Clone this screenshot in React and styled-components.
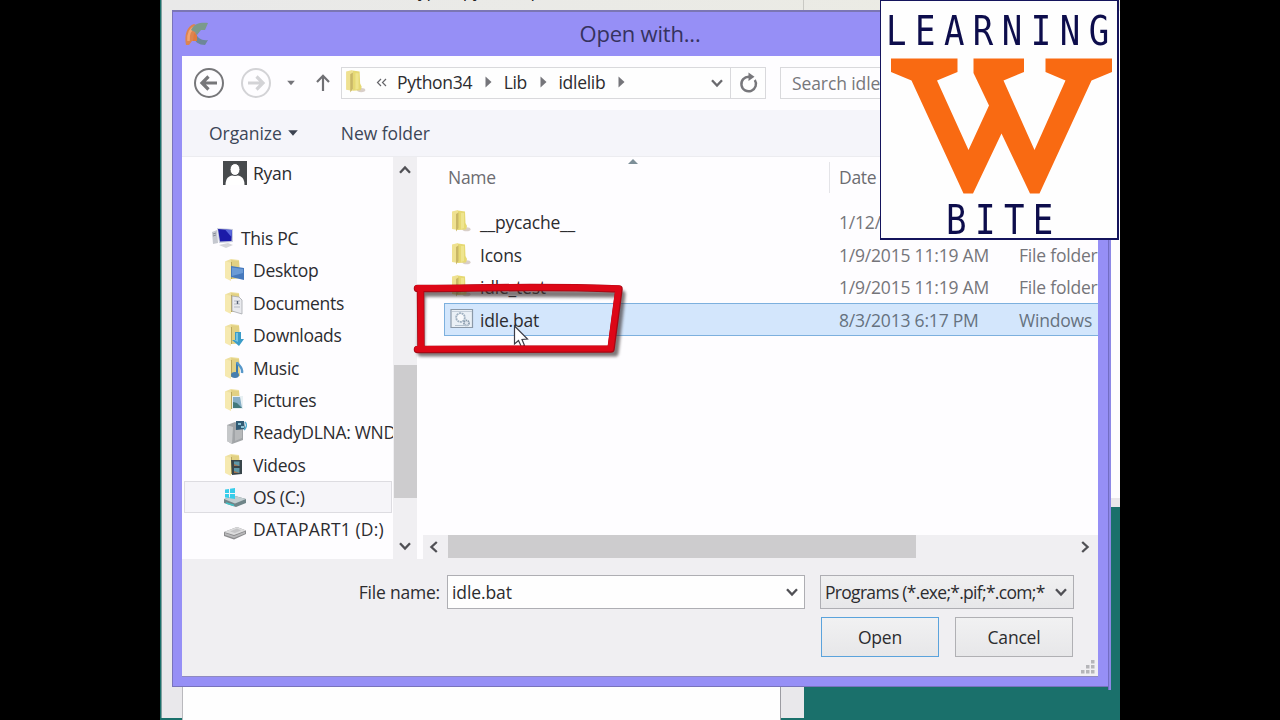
import React from "react";
import styled, { createGlobalStyle, css } from "styled-components";

const GlobalStyle = createGlobalStyle`
  * {
    box-sizing: border-box;
  }

  body {
    margin: 0;
    background: #000;
    overflow: hidden;
  }
`;

const places = [
  { name: "Ryan", icon: "user" },
  { gap: true },
  { name: "This PC", icon: "pc", root: true },
  { name: "Desktop", icon: "desktop" },
  { name: "Documents", icon: "documents" },
  { name: "Downloads", icon: "downloads" },
  { name: "Music", icon: "music" },
  { name: "Pictures", icon: "pictures" },
  { name: "ReadyDLNA: WND", icon: "server" },
  { name: "Videos", icon: "videos" },
  { name: "OS (C:)", icon: "osdrive", active: true },
  { name: "DATAPART1 (D:)", icon: "drive", wide: true },
];

const files = [
  { name: "__pycache__", date: "1/12/" },
  { name: "Icons", date: "1/9/2015 11:19 AM", type: "File folder" },
  { name: "idle_test", date: "1/9/2015 11:19 AM", type: "File folder" },
  { name: "idle.bat", date: "8/3/2013 6:17 PM", type: "Windows", selected: true },
];

/* ---------- icons ---------- */

function FolderIcon({ size = 24, children }) {
  return (
    <svg width={size} height={size} viewBox="1 0 24 24">
      <path d="M4 3 L9 1 L17 2 L18 20 L9 21 L4 20Z" fill="#eee0a0" />
      <path d="M9 2 L17 3 L18 20 L10 21Z" fill="#e2d183" />
      <path d="M3 3 L9 5 L9 23 L3 20Z" fill="#f6e9b0" />
      <path d="M9.5 4 L9.5 21" stroke="#b9a65c" strokeWidth="1" />
      {children}
    </svg>
  );
}

function PlainFolder({ size = 24 }) {
  return (
    <svg width={size} height={size} viewBox="1 1 24 24">
      <ellipse cx="17.5" cy="20.3" rx="4" ry="2" fill="#d9cfc9" />
      <path d="M3 2.5 L9 1 L9 21 L3 20Z" fill="#efe190" />
      <path d="M9 1.5 L16 2.5 L16.5 14 L18 17 L17 20.5 L9 21Z" fill="#e6d974" />
      <path d="M7 5 L9.5 3.5 L9.5 19 L7 22.5Z" fill="#c9b766" />
      <path d="M12 4 L15 4 L15 19 L12 20Z" fill="#efe58e" />
    </svg>
  );
}

function PlaceIcon({ kind }) {
  switch (kind) {
    case "user":
      return (
        <svg width="24" height="24" viewBox="0 0 24 24">
          <path d="M0 0H24V24H0Z" fill="#474a4d" />
          <path d="M2.5 24 C2.5 17 6 15 9 14.5 L15 14.5 C18 15 21.5 17 21.5 24Z" fill="#fff" />
          <ellipse cx="12" cy="8.5" rx="5" ry="6" fill="#fff" stroke="#474a4d" strokeWidth="1" />
        </svg>
      );
    case "pc":
      return (
        <svg width="24" height="24" viewBox="0 0 24 24">
          <path d="M1 6 L6 4 L7 17 L2 18Z" fill="#c5c8cf" />
          <path d="M2 8 L5 7 M2 10 L5 9" stroke="#888d99" />
          <path d="M6 2 L22 3 L22 16 L8 17Z" fill="#c9cede" />
          <path d="M7 3 L21 4 L20.5 15 L9 15.5Z" fill="#1b1aa8" />
          <path d="M14 3.5 L21 4 L20.5 11Z" fill="#5a68dc" />
          <path d="M8 19 L17 17 L22 19 L15 22Z" fill="#d5d5da" />
        </svg>
      );
    case "desktop":
      return (
        <FolderIcon>
          <path d="M9 8 L22 10 L22 22 L9 19Z" fill="#4679bd" />
          <path d="M10 9.5 L21 11 L21 15 L10 18Z" fill="#6b9bd6" />
        </FolderIcon>
      );
    case "documents":
      return (
        <FolderIcon>
          <path d="M10 5 L17 6 L20 9 L20 23 L10 20Z" fill="#e9eaee" stroke="#a6a8ad" strokeWidth=".8" />
          <path d="M12 10 H18 M12 13 H18 M12 16 H18" stroke="#b4bac5" />
          <path d="M15.5 10 V13" stroke="#566174" strokeWidth="1.4" />
        </FolderIcon>
      );
    case "downloads":
      return (
        <FolderIcon>
          <path d="M13 9 H19 V16 H22 L17 23 L10 17 H13Z" fill="#3b9cc8" />
          <path d="M14 10 H16 V19 L12 17 H14Z" fill="#75c4e2" />
        </FolderIcon>
      );
    case "music":
      return (
        <FolderIcon>
          <path d="M15 7 V18" stroke="#3a79ad" strokeWidth="2" />
          <path d="M15 6 C16 10 21 10 20 17" stroke="#5697c9" strokeWidth="2.4" fill="none" />
          <ellipse cx="13" cy="19" rx="4" ry="3" fill="#477fae" />
        </FolderIcon>
      );
    case "pictures":
      return (
        <FolderIcon>
          <path d="M10 8 L21 8 L21 21 L10 21Z" fill="#e8f0f3" />
          <path d="M11 9 L18 9 L20 20 L11 20Z" fill="#86aec6" />
          <path d="M11 14 L15 15 L20 20 L11 20Z" fill="#43797c" />
        </FolderIcon>
      );
    case "server":
      return (
        <svg width="24" height="24" viewBox="0 0 24 24">
          <path d="M4 5 L12 2 L20 6 L20 20 L9 24 L4 21Z" fill="#a2a5a8" />
          <path d="M4 5 L10 7 L9 24 L4 21Z" fill="#c6c8ca" />
          <path d="M12 10 L19 9 L19 18 L12 21Z" fill="#b7b9bb" />
          <path d="M13 1 L21 1 L22 9 L13 10Z" fill="#315b75" />
          <path d="M15 3 H18 V5 H15Z M18 6 H21 V8 H18Z" fill="#8bc3d6" />
          <path d="M22 2 C24 4 24 7 21 10" stroke="#53add0" fill="none" strokeWidth="1.5" />
        </svg>
      );
    case "videos":
      return (
        <FolderIcon>
          <path d="M9 7 L20 7 L20 21 L10 22Z" fill="#39464b" />
          <path d="M12 8.5 H17.5 V13 H12Z M12 15 H17.5 V20 H12Z" fill="#5f98a8" />
          <path d="M12 11 L17.5 13 H12Z M12 18 L17.5 20 H12Z" fill="#a1744f" />
        </FolderIcon>
      );
    case "osdrive":
      return (
        <svg width="24" height="24" viewBox="0 0 24 24">
          <path d="M1 14 L12 11 L23 14 L23 18 L13 22 L1 18Z" fill="#6f8488" />
          <path d="M1 14 L12 11 L23 14 L12 18.5Z" fill="#c1cdd0" />
          <path d="M3 18 L11 20.5" stroke="#41c3c8" strokeWidth="1.5" />
          <path d="M2 4.5 L6 4 V8 H2Z M7 3.8 L12 3 V8 H7Z M2 9 H6 V13 L2 12.5Z M7 9 H12 V14 L7 13.3Z" fill="#38cdea" />
        </svg>
      );
    default:
      return (
        <svg width="24" height="24" viewBox="0 -1 24 24">
          <path d="M1 14 L14 9 L23 12.5 L23 16 L11 21.5 L1 18Z" fill="#8c8c8e" />
          <path d="M1 14 L14 9 L23 12.5 L11 17Z" fill="#dcdcdd" />
          <path d="M2 15 L11 18 L22 13.7 V15.5 L11 20 L2 17Z" fill="#b9b9bb" />
          <path d="M14 10.5 L18 12.5 L12 15 L7 13.5Z" fill="#c4c4c6" />
        </svg>
      );
  }
}

function BatIcon() {
  return (
    <svg width="24" height="22" viewBox="0 0 24 22">
      <path d="M1 0.5H22.5V18.5H1Z" fill="#eaf0f6" stroke="#8b99a8" strokeWidth="1.2" />
      <path d="M2 2.5H22" stroke="#c3cdd8" />
      <circle cx="10.5" cy="8.5" r="4.3" fill="#f7f9fb" stroke="#9fb0c0" strokeWidth="1.8" strokeDasharray="2 .6" />
      <circle cx="16.5" cy="14" r="2.6" fill="#dfe6ee" stroke="#8799ab" strokeWidth="1.6" strokeDasharray="1.6 .6" />
      <path d="M5 16.5H19" stroke="#b4c2cf" />
    </svg>
  );
}

function Chevron({ dir = "down", color = "#505055", size = 14 }) {
  const turn = { down: 0, left: 90, up: 180, right: 270 }[dir];
  return (
    <svg width={size} height={size} viewBox="0 0 14 14">
      <path
        d="M2 4.2 L7 9.6 L12 4.2"
        fill="none"
        stroke={color}
        strokeWidth="2.3"
        transform={`rotate(${turn} 7 7)`}
      />
    </svg>
  );
}

function RoundArrow({ color, flip }) {
  return (
    <svg width="32" height="32" viewBox="0 0 32 32">
      <circle cx="16" cy="16" r="14" fill="none" stroke={color} strokeWidth="2" />
      <path
        d="M24 16 H9.5 M15.5 9.5 L9 16 L15.5 22.5"
        fill="none"
        stroke={color}
        strokeWidth="3.2"
        transform={flip ? "rotate(180 16 16)" : undefined}
      />
    </svg>
  );
}

function Caret({ color = "#75757a", right }) {
  return right ? (
    <svg width="7" height="12" viewBox="0 0 7 12">
      <path d="M0.5 0.5 L6.5 6 L0.5 11.5Z" fill={color} />
    </svg>
  ) : (
    <svg width="10" height="6" viewBox="0 0 10 6">
      <path d="M0.2 0.3 H9.8 L5 5.7Z" fill={color} />
    </svg>
  );
}

/* ---------- desktop behind the dialog ---------- */

const Stage = styled.main`
  width: 1280px;
  height: 720px;
  display: flex;
  justify-content: center;
  background: #000;
  font-family: "Open Sans", "Noto Sans", sans-serif;
  font-size: 17.5px;
  letter-spacing: -0.3px;
  line-height: 24px;
  color: #2c2c2f;
`;

const Screen = styled.div`
  position: relative;
  width: 960px;
  height: 720px;
  overflow: hidden;
  background: #1a706b;
`;

const BackWindow = styled.div`
  position: absolute;
  left: 1px;
  top: 0;
  width: 643px;
  height: 718px;
  background: #e9e8eb;
  border-left: 1px solid #7fa09f;
  padding-left: 20px;
`;

const BackPage = styled.div`
  width: 599px;
  height: 720px;
  background: #fefefe;
  border-left: 1px solid #b9b9bd;
  border-right: 1px solid #9c9ca2;
`;

const SideWindow = styled.div`
  position: absolute;
  left: 643px;
  top: 0;
  width: 317px;
  height: 507px;
  background: #fdfcfe;
  border-bottom: 9px solid #e8e6ea;
`;

const TopStrip = styled.div`
  position: absolute;
  left: 3px;
  top: 0;
  width: 957px;
  height: 11px;
  display: flex;
  overflow: hidden;
  background: linear-gradient(90deg, #e9e9e9, #ebebe4 80%);
`;

const StripText = styled.div`
  flex: none;
  display: flex;
  gap: 12px;
  width: 640px;
  height: 24px;
  padding-left: 249px;
  margin-top: -22px;
  color: #222;
`;

const StripEnd = styled.div`
  flex: 1;
  border-left: 1px solid #c9c9c4;
`;

/* ---------- dialog ---------- */

const Dialog = styled.section`
  position: absolute;
  left: 12px;
  top: 10px;
  width: 939px;
  height: 677px;
  display: flex;
  flex-direction: column;
  padding: 0 12px 9px 9px;
  background: #968ff6;
  border: 1px solid #7873bb;
  border-top: 2px solid #7b76b4;
  border-right-color: #8983d8;
`;

const DialogEdge = styled.div`
  position: absolute;
  left: 948px;
  top: 240px;
  width: 3px;
  height: 450px;
  background: #8d87e6;
  border-left: 1px solid #726dc4;
`;

const TitleBar = styled.header`
  position: relative;
  height: 44px;
  flex: none;
  display: flex;
  align-items: center;
  justify-content: center;
  padding: 0 0 2px 0;
  font-size: 22px;
  letter-spacing: -0.2px;
  color: #35325e;
`;

const AppIcon = styled.div`
  position: absolute;
  left: 1px;
  top: 9px;
  width: 26px;
  height: 26px;
`;

const Client = styled.div`
  flex: 1;
  min-height: 0;
  display: flex;
  flex-direction: column;
  background: #f0eff2;
  border-bottom: 1px solid #8f8ac0;
  overflow: hidden;
`;

const NavBar = styled.nav`
  height: 54px;
  flex: none;
  display: flex;
  align-items: center;
  padding-left: 11px;
  background: #fefdff;
`;

const NavButton = styled.span`
  display: flex;
  align-items: center;
  justify-content: center;
  width: ${(p) => p.$width}px;
  padding-left: ${(p) => p.$inset || 0}px;
`;

const Address = styled.div`
  width: 425px;
  height: 32px;
  flex: none;
  display: flex;
  align-items: center;
  gap: 12px;
  margin-left: 7px;
  padding-left: 2px;
  padding-bottom: 2px;
  border: 1px solid #d9d9dc;
  background: #fefefe;
`;

const AddressStart = styled.span`
  display: flex;
  align-items: center;
  gap: 7px;
  margin-right: -2px;
`;

const Crumb = styled.span`
  display: flex;
  align-items: center;
  gap: 12.5px;
`;

const AddressEnd = styled.div`
  margin-left: auto;
  display: flex;
  align-items: center;
  height: 30px;
  margin-bottom: -2px;
`;

const Refresh = styled.div`
  display: flex;
  align-items: center;
  justify-content: center;
  width: 35px;
  height: 100%;
  margin-left: 6px;
  padding-left: 1px;
  border-left: 1px solid #d9d9dc;
`;

const SearchBox = styled.div`
  flex: none;
  width: 290px;
  height: 32px;
  margin-left: 14px;
  padding: 3px 11px;
  border: 1px solid #d9d9dc;
  letter-spacing: -0.1px;
  color: #77777b;
`;

const Toolbar = styled.div`
  height: 47px;
  flex: none;
  display: flex;
  align-items: center;
  gap: 43px;
  padding-left: 27px;
  letter-spacing: -0.05px;
  background: #f5f5fa;
  border-bottom: 1px solid #ececf0;
  color: #3c4657;
`;

const ToolButton = styled.span`
  display: flex;
  align-items: center;
  gap: 6px;
`;

const Main = styled.div`
  height: 402px;
  flex: none;
  display: flex;
`;

const Sidebar = styled.aside`
  width: 211px;
  flex: none;
  overflow: hidden;
  background: #fefdff;
`;

const PlaceRow = styled.div`
  display: flex;
  align-items: center;
  gap: 6px;
  height: 32.4px;
  margin-left: 2px;
  margin-right: 1px;
  padding-left: ${(p) => (p.$root ? 26 : 38)}px;
  border: 1px solid transparent;
  letter-spacing: ${(p) => (p.$wide ? 0.15 : -0.3)}px;
  white-space: nowrap;

  svg {
    flex: none;
  }

  ${(p) =>
    p.$active &&
    css`
      background: #f6f5f9;
      border-color: #dddce1;
    `}
`;

const VScroll = styled.div`
  width: 24px;
  flex: none;
  display: flex;
  flex-direction: column;
  align-items: center;
  justify-content: space-between;
  padding: 6px 0 6px;
  background: #f0eff2;
`;

const VThumb = styled.div`
  width: 23px;
  height: 133px;
  margin-top: 146px;
  background: #cdccce;
`;

const FilePane = styled.div`
  flex: 1;
  min-width: 0;
  display: flex;
  flex-direction: column;
  background: #fefdff;
  overflow: hidden;
`;

const columns = css`
  display: grid;
  grid-template-columns: 394px 180px 1fr;
  align-items: center;
`;

const HeaderRow = styled.div`
  ${columns}
  position: relative;
  height: 49px;
  padding: 0 0 9px 27px;
  color: #6c6c71;
`;

const HeaderCell = styled.div`
  height: 31px;
  padding: 3px 0;
  margin-left: ${(p) => (p.$line ? -9 : -10)}px;
  padding-left: ${(p) => (p.$line ? 9 : 13)}px;
  border-left: 1px solid ${(p) => (p.$line ? "#e4e4e8" : "transparent")};
`;

const SortMark = styled.div`
  position: absolute;
  left: 211px;
  top: 1px;
  line-height: 0;
`;

const FileRow = styled.div`
  ${columns}
  height: 32.4px;
  margin-left: 27px;
  border: 1px solid transparent;
  border-right: 0;
  letter-spacing: -0.2px;
  color: #75757a;
  white-space: nowrap;

  ${(p) =>
    p.$selected &&
    css`
      background: #d3e6fc;
      border-color: #7db0de;
      color: #66727f;
      padding-top: 1px;
    `}
`;

const NameCell = styled.span`
  display: flex;
  align-items: center;
  gap: 6px;
  padding-left: 5px;
  color: #2c2c2f;
`;

const HScroll = styled.div`
  display: flex;
  align-items: center;
  height: 24px;
  margin-top: auto;
  margin-left: 6px;
  padding: 0 6px 1px 4px;
  background: #f0eff2;
`;

const HThumb = styled.div`
  width: 468px;
  height: 23px;
  margin-left: 7px;
  margin-right: auto;
  background: #cdccce;
`;

const Footer = styled.footer`
  flex: 1;
  display: flex;
  flex-direction: column;
  gap: 8px;
  padding: 16px 24px 0 0;
`;

const FooterLine = styled.div`
  display: flex;
  justify-content: flex-end;
  align-items: center;
  letter-spacing: -0.2px;
`;

const Field = styled.div`
  display: flex;
  align-items: center;
  justify-content: space-between;
  width: ${(p) => p.$width}px;
  height: 34px;
  padding: 0 5px 0 4px;
  margin-left: ${(p) => p.$offset}px;
  border: 1px solid #aeaeb3;
  background: ${(p) => (p.$filled ? "linear-gradient(#f0f0f1, #e7e7e9)" : "#fefefe")};
  letter-spacing: ${(p) => (p.$filled ? -0.7 : -0.1)}px;
  white-space: nowrap;
`;

const Button = styled.button`
  width: 118px;
  height: 40px;
  margin: 0 1px 0 15px;
  padding: 0 0 1px;
  font: inherit;
  letter-spacing: inherit;
  color: inherit;
  border: 1px solid ${(p) => (p.$primary ? "#5ba3dc" : "#b0b0b4")};
  background: linear-gradient(#f1f1f2, #e7e7e9);
`;

const Grip = styled.div`
  position: absolute;
  right: 15px;
  bottom: 12px;
  line-height: 0;
`;

/* ---------- overlays ---------- */

const Overlay = styled.svg`
  position: absolute;
  left: 245px;
  top: 275px;
`;

const Badge = styled.div`
  position: absolute;
  right: 1px;
  top: 0;
  width: 239px;
  height: 240px;
  padding: 0 2px;
  background: #fefefe;
  border: 1px solid #14145c;
  border-width: 1px 2px 2px 1px;
  color: #0d0d4c;
  overflow: hidden;
`;

const BadgeWord = styled.div`
  width: max-content;
  font-family: "DejaVu Sans Mono", monospace;
  font-size: 41px;
  line-height: 40px;
  height: 40px;
  letter-spacing: 10.2px;
  white-space: nowrap;
  transform: scaleX(0.83);
  transform-origin: 0 0;
  margin-left: ${(p) => p.$indent}px;
  margin-top: ${(p) => p.$top}px;
`;

const BadgeArt = styled.svg`
  display: block;
  margin: 6px 0 0 7px;
`;

function App() {
  return (
    <>
      <GlobalStyle />
      <Stage>
        <Screen>
          <SideWindow />
          <BackWindow>
            <BackPage />
          </BackWindow>
          <TopStrip>
            <StripText>
              <span>type:</span>
              <span>python</span>
              <span>p</span>
            </StripText>
            <StripEnd />
          </TopStrip>

          <Dialog>
            <TitleBar>
              <AppIcon>
                <svg width="26" height="26" viewBox="0 0 26 26">
                  <path d="M3 24 C1 14 4 5 11 3 L17 6 L12 14 L15 20 L9 20 L6 24Z" fill="#dd8450" />
                  <path d="M5.5 20 C5 12 7 8 12 6" stroke="#f3a672" strokeWidth="2.5" fill="none" />
                  <path d="M8 9 C11 2 19 1 25 2 L22 9 L18 9 L14 14 L12 11Z" fill="#7b9a8c" />
                  <path d="M13 12 C14 17 19 20 25 19 L22 24 C16 24 12 21 11 17Z" fill="#6d8798" />
                  <path d="M11 12 L14 14 L14 20 L10 20Z" fill="#e07a3c" />
                </svg>
              </AppIcon>
              Open with...
            </TitleBar>

            <Client>
              <NavBar>
                <NavButton $width={32}>
                  <RoundArrow color="#77777a" />
                </NavButton>
                <NavButton $width={62}>
                  <RoundArrow color="#d3d3d6" flip />
                </NavButton>
                <NavButton $width={8}>
                  <Caret />
                </NavButton>
                <NavButton $width={39} $inset={16}>
                  <svg width="16" height="20" viewBox="0 0 16 20">
                    <path d="M8 18 V3 M2 9 L8 2.8 L14 9" fill="none" stroke="#707074" strokeWidth="2.2" />
                  </svg>
                </NavButton>
                <Address>
                  <AddressStart>
                    <PlainFolder size={25} />
                    <svg width="11" height="9" viewBox="0 0 11 9">
                      <path d="M5 1 L1.5 4.5 L5 8 M10 1 L6.5 4.5 L10 8" fill="none" stroke="#66666a" strokeWidth="1.2" />
                    </svg>
                  </AddressStart>
                  <Crumb>
                    Python34
                    <Caret right />
                  </Crumb>
                  <Crumb>
                    Lib
                    <Caret right />
                  </Crumb>
                  <Crumb>
                    idlelib
                    <Caret right />
                  </Crumb>
                  <AddressEnd>
                    <Chevron color="#6a6a6e" />
                    <Refresh>
                      <svg width="20" height="22" viewBox="0 0 20 22">
                        <path d="M15.8 8 A7.3 7.3 0 1 1 10 4.7" fill="none" stroke="#77777b" strokeWidth="2.4" />
                        <path d="M9.5 0.5 L15.5 4.8 L9.5 9Z" fill="#77777b" />
                      </svg>
                    </Refresh>
                  </AddressEnd>
                </Address>
                <SearchBox>Search idle</SearchBox>
              </NavBar>

              <Toolbar>
                <ToolButton>
                  Organize <Caret color="#3c4350" />
                </ToolButton>
                <ToolButton>New folder</ToolButton>
              </Toolbar>

              <Main>
                <Sidebar>
                  {places.map((place, i) => (
                    <PlaceRow key={i} $root={place.root} $active={place.active} $wide={place.wide}>
                      {!place.gap && <PlaceIcon kind={place.icon} />}
                      {place.name}
                    </PlaceRow>
                  ))}
                </Sidebar>
                <VScroll>
                  <Chevron dir="up" />
                  <VThumb />
                  <Chevron />
                </VScroll>
                <FilePane>
                  <HeaderRow>
                    <SortMark>
                      <svg width="10" height="7" viewBox="0 0 10 7">
                        <path d="M0 6 L5 1 L10 6Z" fill="#7d8f98" />
                      </svg>
                    </SortMark>
                    <HeaderCell>Name</HeaderCell>
                    <HeaderCell $line>Date</HeaderCell>
                  </HeaderRow>
                  {files.map((file) => (
                    <FileRow key={file.name} $selected={file.selected}>
                      <NameCell>
                        {file.selected ? <BatIcon /> : <PlainFolder />}
                        {file.name}
                      </NameCell>
                      <span>{file.date}</span>
                      <span>{file.type}</span>
                    </FileRow>
                  ))}
                  <HScroll>
                    <Chevron dir="left" />
                    <HThumb />
                    <Chevron dir="right" />
                  </HScroll>
                </FilePane>
              </Main>

              <Footer>
                <FooterLine>
                  File name:
                  <Field $width={358} $offset={7}>
                    idle.bat
                    <Chevron />
                  </Field>
                  <Field $width={254} $offset={15} $filled>
                    Programs (*.exe;*.pif;*.com;*
                    <Chevron />
                  </Field>
                </FooterLine>
                <FooterLine>
                  <Button $primary>Open</Button>
                  <Button>Cancel</Button>
                </FooterLine>
              </Footer>
            </Client>
            <Grip>
              <svg width="14" height="14" viewBox="0 0 14 14" fill="#b5b5b9">
                <path d="M10 0h3.5v3.5H10z M5 5h3.5v3.5H5z M10 5h3.5v3.5H10z M0 10h3.5v3.5H0z M5 10h3.5v3.5H5z M10 10h3.5v3.5H10z" />
              </svg>
            </Grip>
          </Dialog>
          <DialogEdge />

          <Overlay width="230" height="90" viewBox="405 275 230 90">
            <path
              d="M514.5 326 V344 L518.5 340.5 L521.5 347 L524.5 345.5 L522 339.5 L527.5 339Z"
              fill="#fff"
              stroke="#3c3c46"
              strokeWidth="1.2"
            />
            <g fill="none" strokeLinejoin="round" strokeLinecap="round">
              <path
                d="M422 293 L622 294 L615 353 L421 353Z"
                stroke="#3a3030"
                strokeOpacity=".65"
                strokeWidth="7"
                style={{ filter: "blur(1.5px)" }}
              />
              <path
                d="M417.5 288.5 C470 289 520 285.5 619 289 L611 349 L417.5 349.5 M420.5 289 L421 349"
                stroke="#a80814"
                strokeWidth="7.5"
              />
              <path
                d="M417.5 288 C470 288.5 520 285.5 618.5 288.5 L610.5 348.5 L417.5 349 M420.5 289 L421 348"
                stroke="#dd0717"
                strokeWidth="6"
              />
            </g>
          </Overlay>

          <Badge>
            <BadgeWord $indent={3} $top={10}>LEARNING</BadgeWord>
            <BadgeArt width="224" height="138" viewBox="890 57 224 138">
              <path
                d="M891 58.5 H957.5 V72 L937 80.5 L968.5 150 L989 105.5 L973.5 73 V58.5 H1024 V72 L1003.5 80.5 L1034.5 150 L1065.5 80.5 L1045.5 72 V58.5 H1112 V72 L1091.5 80.5 L1039.5 193.5 H1030 L1001.5 133.5 L973 193.5 H963.5 L911.5 80.5 L891 72Z"
                fill="#f96a12"
              />
            </BadgeArt>
            <BadgeWord $indent={63} $top={5}>BITE</BadgeWord>
          </Badge>
        </Screen>
      </Stage>
    </>
  );
}

export default App;
